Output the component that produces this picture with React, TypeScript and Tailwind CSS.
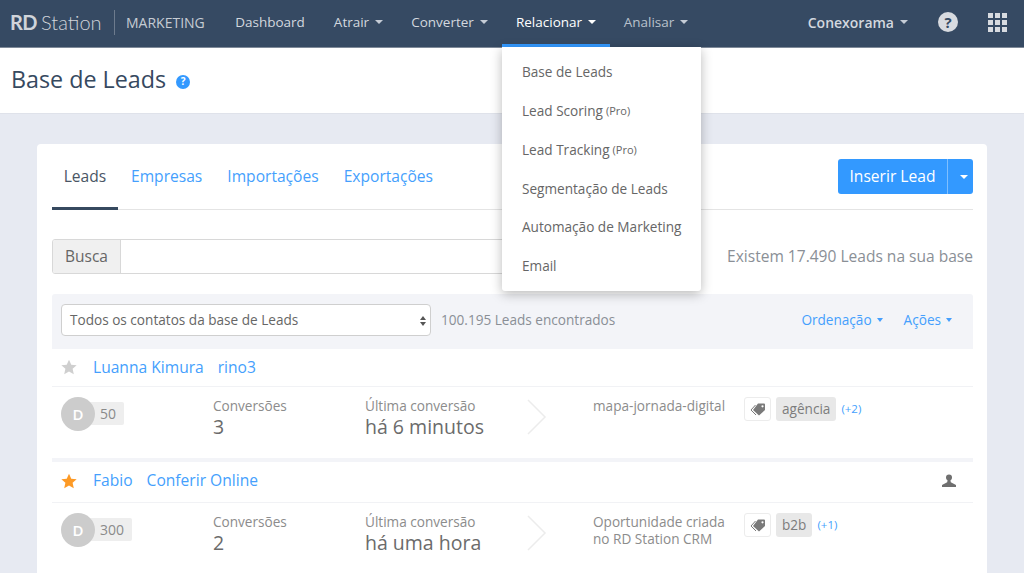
const font = { fontFamily: '"Open Sans", sans-serif' };

function Caret({ className = "border-t-[#c5ccd6]" }: { className?: string }) {
  return <span className={`ml-[6px] inline-block h-0 w-0 border-x-[4px] border-t-[4px] border-x-transparent ${className}`} />;
}

function LinkCaret() {
  return <span className="ml-[5px] inline-block h-0 w-0 border-x-[3.5px] border-t-[4px] border-x-transparent border-t-[#459ffd]" />;
}

function Star({ color }: { color: string }) {
  return (
    <svg width="16" height="16" viewBox="0 0 24 24" fill={color}>
      <path d="M12 1l3.4 7.6 8.1.8-6.1 5.4 1.8 8.1L12 18.7l-7.2 4.2 1.8-8.1L.5 9.4l8.1-.8z" />
    </svg>
  );
}

function TagIcon() {
  return (
    <svg width="16" height="14" viewBox="0 0 16 14">
      <path
        fill="#7a7a7a"
        fillRule="evenodd"
        d="M8 1.5h6a1 1 0 0 1 1 1V8l-6 5.5L3 8zM12.5 3.2a1.1 1.1 0 1 0 0 2.2 1.1 1.1 0 0 0 0-2.2z"
      />
      <path fill="none" stroke="#7a7a7a" strokeWidth="1" d="M5.5 3 1 8l5 5" />
    </svg>
  );
}

function Score({ value, width }: { value: string; width: string }) {
  return (
    <div className="relative h-[34px]">
      <div className={`absolute left-[16px] top-[5px] flex h-[23px] items-center justify-end rounded-[2px] bg-[#eeeeee] pr-2 text-[14px] text-[#8a8a8a] ${width}`}>
        {value}
      </div>
      <div className="absolute left-0 top-0 flex h-[34px] w-[34px] items-center justify-center rounded-full bg-[#cccccc] text-[15px] font-semibold text-white">
        D
      </div>
    </div>
  );
}

type Lead = {
  name: string;
  company: string;
  starColor: string;
  showUser?: boolean;
  score: string;
  scoreWidth: string;
  conversions: string;
  last: string;
  source: string[];
  tag: string;
  more: string;
  divider?: boolean;
};

const leads: Lead[] = [
  {
    name: "Luanna Kimura",
    company: "rino3",
    starColor: "#cfcfcf",
    score: "50",
    scoreWidth: "w-[47px]",
    conversions: "3",
    last: "há 6 minutos",
    source: ["mapa-jornada-digital"],
    tag: "agência",
    more: "(+2)",
    divider: true,
  },
  {
    name: "Fabio",
    company: "Conferir Online",
    starColor: "#fd9a26",
    showUser: true,
    score: "300",
    scoreWidth: "w-[55px]",
    conversions: "2",
    last: "há uma hora",
    source: ["Oportunidade criada", "no RD Station CRM"],
    tag: "b2b",
    more: "(+1)",
  },
];

function LeadRow({ lead }: { lead: Lead }) {
  return (
    <div className={lead.divider ? "border-b-[4px] border-[#f3f4f8]" : ""}>
      <div className={`flex items-center justify-between border-b border-[#f1f2f5] pl-[9px] pr-[17px] ${lead.divider ? "h-[38px]" : "h-[41px] pb-[2px]"}`}>
        <div className="flex items-center">
          <Star color={lead.starColor} />
          <span className="ml-[16px] text-[15.6px] text-[#459ffd]">{lead.name}</span>
          <span className="ml-[14px] text-[15.6px] text-[#459ffd]">{lead.company}</span>
        </div>
        {lead.showUser && (
          <svg width="14" height="14" viewBox="0 0 14 14" fill="#6f6f6f">
            <circle cx="7" cy="3.6" r="3" />
            <path d="M5.6 6h2.8l.4 2.2L14 11v2H0v-2l5.2-2.8z" />
          </svg>
        )}
      </div>
      <div className={`grid grid-cols-[152px_152px_162px_66px_151px_1fr] pl-[9px] pt-[10px] ${lead.divider ? "h-[71px]" : "h-[70px]"}`}>
        <Score value={lead.score} width={lead.scoreWidth} />
        <div>
          <div className="text-[13.6px] leading-[18px] text-[#8c8c8c]">Conversões</div>
          <div className="text-[19.5px] leading-[23px] text-[#6b6b6b]">{lead.conversions}</div>
        </div>
        <div>
          <div className="text-[13.6px] leading-[18px] text-[#8c8c8c]">Última conversão</div>
          <div className="text-[19.5px] leading-[23px] text-[#6b6b6b]">{lead.last}</div>
        </div>
        <svg width="20" height="36" viewBox="0 0 20 36" fill="none" stroke="#ececec" strokeWidth="1.5" className="mt-[2px]">
          <path d="M1 1l17 17L1 35" />
        </svg>
        <div className="text-[13.6px] leading-[17px] text-[#8c8c8c]">
          {lead.source.map((line) => (
            <div key={line}>{line}</div>
          ))}
        </div>
        <div className="flex items-start">
          <div className="flex h-[24px] w-[27px] items-center justify-center rounded-[3px] border border-[#ececec] bg-white">
            <TagIcon />
          </div>
          <div className="ml-[5px] flex h-[24px] items-center rounded-[3px] bg-[#e8e8e8] px-[6px] text-[13.6px] text-[#7c7c7c]">
            {lead.tag}
          </div>
          <div className="ml-[5px] flex h-[24px] items-center text-[11.5px] text-[#459ffd]">{lead.more}</div>
        </div>
      </div>
    </div>
  );
}

const menu = [
  { label: "Base de Leads" },
  { label: "Lead Scoring", pro: true },
  { label: "Lead Tracking", pro: true },
  { label: "Segmentação de Leads" },
  { label: "Automação de Marketing" },
  { label: "Email" },
];

const navItems = [
  { label: "Atrair", w: "w-[77px]" },
  { label: "Converter", w: "w-[105px]" },
];

export default function App() {
  return (
    <div className="relative h-[573px] w-[1024px] overflow-hidden bg-[#e7eaf2] antialiased" style={font}>
      <header className="flex h-[48px] items-center border-b border-[#7f8a99] bg-[#364a63] pb-[3px] text-[13.5px] text-[#d3d8df]">
        <div className="ml-[10px] flex w-[104px] items-baseline text-[#d0d4da]" style={{ fontFamily: '"Lato", sans-serif' }}>
          <span className="text-[20px] font-bold tracking-[-0.5px]">RD</span>
          <span className="ml-[4px] text-[20px] font-light">Station</span>
        </div>
        <div className="h-[25px] w-px bg-[#6d7b8d]" />
        <div className="ml-[11px] w-[94px] text-[14px] text-[#c6ccd4]">MARKETING</div>
        <div className="flex w-[100px] justify-center">Dashboard</div>
        {navItems.map((item) => (
          <div key={item.label} className={`flex items-center justify-center ${item.w}`}>
            {item.label}
            <Caret />
          </div>
        ))}
        <div className="relative flex h-[47px] w-[108px] items-center justify-center self-start pb-[3px] text-white">
          Relacionar
          <Caret className="border-t-white" />
          <div className="absolute inset-x-0 bottom-0 h-[3px] bg-[#3399ff]" />
        </div>
        <div className="flex w-[92px] items-center justify-center text-[#b9c1cc]">
          Analisar
          <Caret />
        </div>
        <div className="ml-auto flex items-center text-[14px] font-semibold text-[#d3d8df]">
          Conexorama
          <Caret />
        </div>
        <div className="ml-[30px] flex h-[20px] w-[20px] items-center justify-center rounded-full bg-[#d8dbe0] text-[15px] font-bold text-[#364a63]">
          ?
        </div>
        <div className="ml-[30px] mr-[17px] grid grid-cols-3 gap-[2px]">
          {Array.from({ length: 9 }).map((_, i) => (
            <span key={i} className="h-[5px] w-[5px] bg-[#d8dbe0]" />
          ))}
        </div>
      </header>

      <div className="flex h-[66px] items-center border-b border-[#dfe2ea] bg-white pb-[2px] pl-[11px]">
        <h1 className="text-[23.3px] leading-none text-[#36495f]">Base de Leads</h1>
        <span className="ml-[10px] mt-[4px] flex h-[14px] w-[14px] items-center justify-center rounded-full bg-[#3399ff] text-[10px] font-bold text-white">
          ?
        </span>
      </div>

      <main className="mx-[37px] mt-[30px] h-[500px] rounded-[4px] bg-white pl-[15px] pr-[14px] pt-[15px]">
        <div className="flex h-[51px] items-start justify-between border-b border-[#e4e4e4]">
          <div className="relative flex h-[51px] text-[15.6px] text-[#459ffd]">
            <div className="flex h-[51px] w-[66px] items-start justify-center border-b-[3px] border-[#36495f] pt-[6px] text-[#4a5565]">Leads</div>
            <div className="ml-[13px] pt-[6px]">Empresas</div>
            <div className="ml-[25px] pt-[6px]">Importações</div>
            <div className="ml-[25px] pt-[6px]">Exportações</div>
          </div>
          <div className="flex h-[35px] overflow-hidden rounded-[3px] bg-[#3399ff] text-white">
            <div className="flex w-[109px] items-center justify-center text-[15.6px]">Inserir Lead</div>
            <div className="flex w-[26px] items-center justify-center border-l border-[#7fbfff]">
              <Caret className="ml-0 border-t-white" />
            </div>
          </div>
        </div>

        <div className="mt-[29px] flex items-center justify-between">
          <div className="flex h-[35px] w-[480px] overflow-hidden rounded-l-[3px] border border-[#d8d8d8]">
            <div className="flex w-[68px] items-center justify-center border-r border-[#d8d8d8] bg-[#f0f0f0] text-[15.5px] text-[#666666]">Busca</div>
          </div>
          <div className="text-[15.55px] text-[#8a8f96]">Existem 17.490 Leads na sua base</div>
        </div>

        <div className="mt-[20px] flex h-[55px] items-center justify-between rounded-t-[3px] bg-[#f3f4f8] pb-[3px] pl-[9px] pr-[21px]">
          <div className="flex items-center">
            <div className="flex h-[32px] w-[370px] items-center justify-between rounded-[4px] border border-[#cfcfcf] bg-white pl-[8px] pr-[4px] pt-[1px] text-[13.6px] text-[#666666]">
              Todos os contatos da base de Leads
              <span className="flex flex-col gap-[2px]">
                <span className="h-0 w-0 border-x-[3px] border-b-[4px] border-x-transparent border-b-[#555555]" />
                <span className="h-0 w-0 border-x-[3px] border-t-[4px] border-x-transparent border-t-[#555555]" />
              </span>
            </div>
            <span className="ml-[10px] mt-[1px] text-[13.6px] text-[#8a8f96]">100.195 Leads encontrados</span>
          </div>
          <div className="mt-[1px] flex items-center text-[13.6px] text-[#459ffd]">
            <span className="flex items-center">
              Ordenação
              <LinkCaret />
            </span>
            <span className="ml-[21px] flex items-center">
              Ações
              <LinkCaret />
            </span>
          </div>
        </div>

        {leads.map((lead) => (
          <LeadRow key={lead.name} lead={lead} />
        ))}
      </main>

      <div className="absolute left-[502px] top-[47px] h-[244px] w-[199px] rounded-b-[3px] bg-white pt-[6px] shadow-[0_3px_12px_rgba(0,0,0,0.28)]">
        {menu.map((item) => (
          <div key={item.label} className="flex h-[38.8px] items-center pl-[20px] text-[13.6px] text-[#666666]">
            {item.label}
            {item.pro && <span className="ml-[3px] text-[11px]">(Pro)</span>}
          </div>
        ))}
      </div>
    </div>
  );
}
